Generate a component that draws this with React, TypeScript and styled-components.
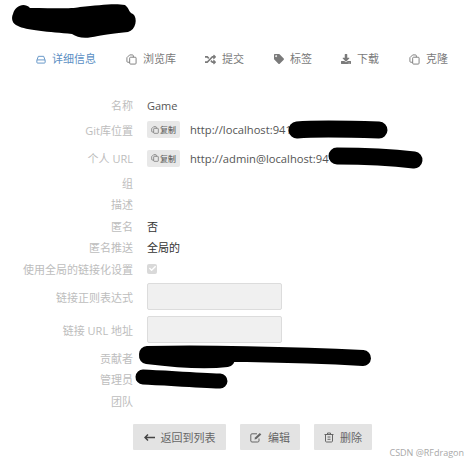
import React from "react";
import styled, { createGlobalStyle } from "styled-components";
import { FaRandom, FaTag, FaDownload, FaCheck } from "react-icons/fa";

const GlobalStyle = createGlobalStyle`
  html, body {
    margin: 0;
    padding: 0;
    background: #fff;
  }
  body {
    font-family: "Open Sans", "Noto Sans CJK SC", sans-serif;
    font-size: 11px;
    color: #555;
  }
`;

const Page = styled.div`
  width: 474px;
  height: 466px;
  overflow: hidden;
  position: relative;
`;

const TitleBar = styled.div`
  height: 47px;
`;

const Tabs = styled.nav`
  display: flex;
  height: 24px;
  padding-left: 36px;
  align-items: center;
`;

const Tab = styled.a<{ $w: number; $active?: boolean }>`
  display: flex;
  align-items: center;
  gap: 6px;
  width: ${({ $w }) => $w}px;
  color: ${({ $active }) => ($active ? "#5b8fc4" : "#7a7a7a")};
  font-size: 11px;
  line-height: 24px;
  svg {
    flex: none;
  }
`;

const Form = styled.div`
  margin-top: 23px;
`;

const Row = styled.div<{ $h: number }>`
  display: grid;
  grid-template-columns: 133px 1fr;
  column-gap: 14px;
  align-items: center;
  height: ${({ $h }) => $h}px;
`;

const Label = styled.div`
  text-align: right;
  color: #bdbdbd;
  font-size: 11px;
  white-space: nowrap;
`;

const Value = styled.div<{ $dark?: boolean }>`
  display: flex;
  align-items: center;
  color: ${({ $dark }) => ($dark ? "#333" : "#555")};
  font-size: 11px;
  height: 100%;
`;

const CopyButton = styled.button`
  display: flex;
  align-items: center;
  justify-content: center;
  gap: 1px;
  width: 33px;
  height: 17px;
  padding: 0;
  border: none;
  border-radius: 2px;
  background: #e8e8e8;
  color: #666;
  font-family: inherit;
  font-size: 8px;
  font-weight: 500;
`;

const Url = styled.span`
  margin-left: 10px;
  font-size: 11.2px;
  color: #555;
  white-space: nowrap;
`;

const Scribble = styled.svg<{ $left?: number }>`
  flex: none;
  display: block;
  overflow: visible;
  margin-left: ${({ $left }) => $left ?? 0}px;
`;

const Check = styled.span`
  display: flex;
  align-items: center;
  justify-content: center;
  width: 10px;
  height: 10px;
  border-radius: 2px;
  background: #d9d9d9;
  color: #fff;
  font-size: 7px;
`;

const Field = styled.div`
  width: 133px;
  height: 25px;
  border: 1px solid #dcdcdc;
  border-radius: 2px;
  background: #f0f0f0;
`;

const Actions = styled.div`
  display: flex;
  gap: 14px;
  margin-top: 12px;
  padding-left: 133px;
`;

const ActionButton = styled.button<{ $w: number }>`
  display: flex;
  align-items: center;
  justify-content: center;
  gap: 6px;
  width: ${({ $w }) => $w}px;
  height: 26px;
  padding: 0;
  border: none;
  border-radius: 1px;
  background: #e3e3e3;
  color: #666;
  font-family: inherit;
  font-size: 11px;
`;

const Watermark = styled.div`
  position: absolute;
  right: 10px;
  bottom: 7px;
  font-size: 9px;
  color: #a8a8a8;
`;

const CloneIcon = ({ size = 11 }: { size?: number }) => (
  <svg width={size} height={size} viewBox="0 0 12 12" fill="none" stroke="currentColor" strokeWidth="1">
    <path d="M4 9H2A1 1 0 0 1 1 8V4L4 1H7A1 1 0 0 1 8 2V3.500" />
    <rect x="4" y="3.500" width="7" height="7.500" rx="1" />
  </svg>
);

const DiskIcon = () => (
  <svg width="10" height="11" viewBox="0 0 12 12" fill="none" stroke="currentColor" strokeWidth="1.1">
    <path d="M1 7L2.800 2.200H9.200L11 7" />
    <rect x="1" y="6.500" width="10" height="3.800" rx="1" />
  </svg>
);

const ArrowIcon = () => (
  <svg width="11" height="9" viewBox="0 0 11 9" fill="none" stroke="#444" strokeWidth="1.5">
    <path d="M11 4.500H1.500M4 1.500L1 4.500L4 7.500" />
  </svg>
);

const EditIcon = () => (
  <svg width="12" height="11" viewBox="0 0 12 11" fill="none" stroke="currentColor" strokeWidth="1">
    <path d="M9 6.500V9A1.200 1.200 0 0 1 7.800 10H2A1.200 1.200 0 0 1 .8 9V3A1.200 1.200 0 0 1 2 1.800H7" />
    <path d="M4.500 7.500L5 5.500L9.800 1L11.300 2.500L6.500 7Z" fill="currentColor" stroke="none" />
  </svg>
);

const TrashIcon = () => (
  <svg width="10" height="11" viewBox="0 0 10 11" fill="none" stroke="currentColor" strokeWidth="1">
    <path d="M.5 2.500H9.500M3.500 2.500V1H6.500V2.500M1.500 2.500V9.200A1 1 0 0 0 2.500 10H7.500A1 1 0 0 0 8.500 9.200V2.500M3.500 5H6.500M3.500 7.300H6.500" />
  </svg>
);

const fields = [
  { label: "组", h: 20 },
  { label: "描述", h: 22 },
  { label: "匿名", h: 21, value: "否" },
  { label: "匿名推送", h: 21, value: "全局的" },
];

export default function App() {
  return (
    <Page>
      <GlobalStyle />
      <TitleBar>
        <Scribble width="140" height="44" viewBox="0 0 140 44">
          <path
            d="M13 14C15 6 24 2 30 8C55 8 75 9 80 7C100 5 115 3 125 5C130 9 128 12 133 14C138 18 136 30 128 32C115 33 105 35 98 36C85 39 78 38 72 34C50 32 25 30 18 26C12 24 11 18 13 14Z"
            fill="#000"
          />
        </Scribble>
      </TitleBar>
      <Tabs>
        <Tab $w={90} $active><DiskIcon />详细信息</Tab>
        <Tab $w={79}><CloneIcon />浏览库</Tab>
        <Tab $w={69}><FaRandom size={11} />提交</Tab>
        <Tab $w={67}><FaTag size={10} />标签</Tab>
        <Tab $w={68}><FaDownload size={10} />下载</Tab>
        <Tab $w={60}><CloneIcon />克隆</Tab>
      </Tabs>
      <Form>
        <Row $h={22}>
          <Label>名称</Label>
          <Value>Game</Value>
        </Row>
        <Row $h={27}>
          <Label>Git库位置</Label>
          <Value>
            <CopyButton><CloneIcon size={8} />复制</CopyButton>
            <Url>http://localhost:941</Url>
            <Scribble width="98" height="16" viewBox="0 0 98 16" $left={-3}>
              <path d="M8 8C30 6 60 7 90 8" fill="none" stroke="#000" strokeWidth="17" strokeLinecap="round" />
            </Scribble>
          </Value>
        </Row>
        <Row $h={30}>
          <Label>个人 URL</Label>
          <Value>
            <CopyButton><CloneIcon size={8} />复制</CopyButton>
            <Url>http://admin@localhost:94</Url>
            <Scribble width="96" height="16" viewBox="0 0 96 16">
              <path d="M8 6C30 6 60 7 85 10" fill="none" stroke="#000" strokeWidth="17" strokeLinecap="round" />
            </Scribble>
          </Value>
        </Row>
        {fields.map((f) => (
          <Row $h={f.h} key={f.label}>
            <Label>{f.label}</Label>
            <Value $dark>{f.value}</Value>
          </Row>
        ))}
        <Row $h={23}>
          <Label>使用全局的链接化设置</Label>
          <Value><Check><FaCheck /></Check></Value>
        </Row>
        <Row $h={33}>
          <Label>链接正则表达式</Label>
          <Value><Field /></Value>
        </Row>
        <Row $h={33}>
          <Label>链接 URL 地址</Label>
          <Value><Field /></Value>
        </Row>
        <Row $h={23}>
          <Label>贡献者</Label>
          <Value>
            <Scribble width="232" height="20" viewBox="0 0 232 20" $left={-8}>
              <path d="M8 6C60 5 150 6 224 10M8 8C40 12 70 13 88 11" fill="none" stroke="#000" strokeWidth="16" strokeLinecap="round" />
            </Scribble>
          </Value>
        </Row>
        <Row $h={20}>
          <Label>管理员</Label>
          <Value>
            <Scribble width="94" height="18" viewBox="0 0 94 18" $left={-12}>
              <path d="M8 7C30 8 60 10 85 11" fill="none" stroke="#000" strokeWidth="15" strokeLinecap="round" />
            </Scribble>
          </Value>
        </Row>
        <Row $h={23}>
          <Label>团队</Label>
          <Value />
        </Row>
      </Form>
      <Actions>
        <ActionButton $w={93}><ArrowIcon />返回到列表</ActionButton>
        <ActionButton $w={60}><EditIcon />编辑</ActionButton>
        <ActionButton $w={58}><TrashIcon />删除</ActionButton>
      </Actions>
      <Watermark>CSDN @RFdragon</Watermark>
    </Page>
  );
}
